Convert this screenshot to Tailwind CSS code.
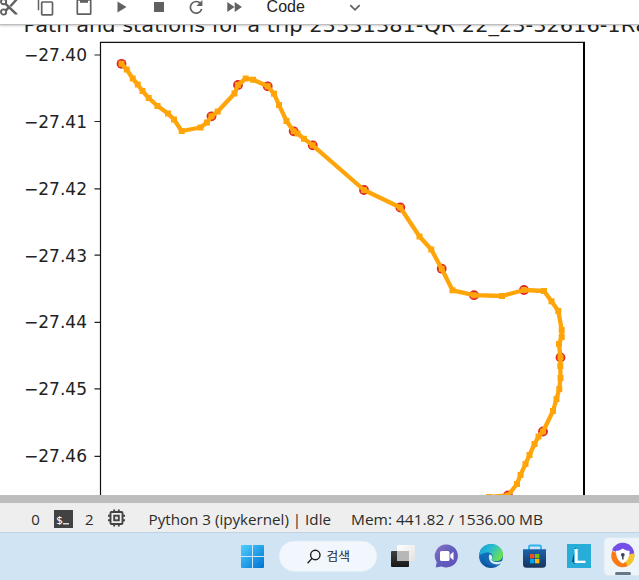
<!DOCTYPE html>
<html lang="ko">
<head>
    <meta charset="UTF-8">
    <meta name="viewport" content="width=device-width, initial-scale=1.0">
    <title>JupyterLab - Path and stations</title>
    <script src="https://cdn.jsdelivr.net/npm/@tailwindcss/browser@4"></script>
</head>
<body class="w-[639px] h-[580px] overflow-hidden flex flex-col bg-white">
    <!-- Notebook toolbar -->
    <header class="h-[25px] shrink-0 relative z-10 bg-white border-b border-[#bdbdbd] shadow-[0_1px_2px_rgba(0,0,0,0.2)] overflow-hidden">
        <svg class="block" width="639" height="24" viewBox="0 0 639 24" fill="#616161">
            <!-- Cut -->
            <g fill="none" stroke="#616161" stroke-width="1.9">
                <circle cx="3.6" cy="1.7" r="2.6"/>
                <circle cx="3.6" cy="12" r="2.6"/>
            </g>
            <path d="M5.6 2.2L17.5 13.6v.8h-2.6L4 4zM5 9.6l3-3 1.800 1.600-3.200 3.200zM9.500 5.500L15-.5h2.500V.3L11.300 7z"/>
            <!-- Copy -->
            <path d="M38.500 10.300V-1h9" fill="none" stroke="#616161" stroke-width="1.500"/>
            <rect x="41.700" y="2" width="10.800" height="12.800" rx=".8" fill="none" stroke="#616161" stroke-width="1.700"/>
            <!-- Paste -->
            <rect x="77.300" y="0" width="13.400" height="14.200" rx=".8" fill="none" stroke="#616161" stroke-width="1.700"/>
            <path d="M80 0h8v2.800h-8z"/>
            <!-- Run, stop, restart, run all -->
            <path d="M117.500 1.600v11L126.500 7z"/>
            <path d="M154 2h10v10h-10z"/>
            <path d="M200.600 3.600A5.800 5.800 0 1 0 201.700 9" fill="none" stroke="#616161" stroke-width="1.700"/>
            <path d="M202.400 0v6h-6z"/>
            <path d="M227.300 2v10l7.200-5zM234.700 2v10l7.200-5z"/>
            <text x="266.500" y="12" font-size="16" font-family="Liberation Sans, Arial, sans-serif" fill="#222" textLength="38.500">Code</text>
            <path d="M350.300 5.200l4.700 4.700 4.700-4.700" fill="none" stroke="#616161" stroke-width="1.700"/>
        </svg>
    </header>

    <!-- Plot output -->
    <main class="h-[470px] shrink-0 overflow-hidden">
        <svg class="block" width="639" height="470" viewBox="0 25 639 470">
            <g font-family="DejaVu Sans, sans-serif" fill="#222" font-size="16.800">
                <text x="23.500" y="32" font-size="20" textLength="625" lengthAdjust="spacingAndGlyphs">Path and stations for a trip 23331381-QR 22_23-32616-1R8</text>
                <text x="24" y="61" textLength="63" lengthAdjust="spacingAndGlyphs">−27.40</text>
                <text x="24" y="128" textLength="63" lengthAdjust="spacingAndGlyphs">−27.41</text>
                <text x="24" y="194.700" textLength="63" lengthAdjust="spacingAndGlyphs">−27.42</text>
                <text x="24" y="261.500" textLength="63" lengthAdjust="spacingAndGlyphs">−27.43</text>
                <text x="24" y="328.300" textLength="63" lengthAdjust="spacingAndGlyphs">−27.44</text>
                <text x="24" y="395" textLength="63" lengthAdjust="spacingAndGlyphs">−27.45</text>
                <text x="24" y="462" textLength="63" lengthAdjust="spacingAndGlyphs">−27.46</text>
            </g>
            <path d="M94.500 55h6M94.500 121.500h6M94.500 188.800h6M94.500 255.200h6M94.500 322.300h6M94.500 388.800h6M94.500 456.300h6" stroke="#222" stroke-width="1.200"/>
            <path d="M100.500 495V42.400H585" fill="none" stroke="#111" stroke-width="1.200"/>
            <path d="M584 42v453" stroke="#000" stroke-width="2"/>
            <g id="stations" fill="#dc2a2a"></g>
            <polyline id="path" fill="none" stroke="#ffa50a" stroke-width="4.300" stroke-linejoin="round"/>
            <g id="stops" fill="#ffa50a"></g>
        </svg>
    </main>
    <div class="h-2 shrink-0 bg-[#bdbdbd]"></div>

    <!-- Status bar -->
    <div class="h-[29px] shrink-0 bg-[#eeeeee]">
        <svg class="block" width="639" height="29" viewBox="0 503 639 29" font-family="Open Sans, Noto Sans, sans-serif" font-size="15" fill="#2b2b2b">
            <text x="31.300" y="525">0</text>
            <path d="M54 510h19v18H54z" fill="#424242"/>
            <text x="56.300" y="523.500" font-size="11.500" font-family="Noto Sans, sans-serif" fill="#fff">$</text>
            <path d="M63 523.800h6" stroke="#fff" stroke-width="1.200"/>
            <text x="85" y="525">2</text>
            <!-- Kernel chip -->
            <g fill="none" stroke="#424242" stroke-width="1.900">
                <rect x="110.500" y="512" width="12" height="12" rx="1"/>
                <rect x="114.200" y="515.700" width="4.600" height="4.600"/>
                <path d="M114.200 509.500v2.500M118.800 509.500v2.500M114.200 524v2.500M118.800 524v2.500M108 515.700h2.500M108 520.300h2.500M122.500 515.700h2.500M122.500 520.300h2.500"/>
            </g>
            <text x="148.500" y="525" textLength="182.500" lengthAdjust="spacingAndGlyphs">Python 3 (ipykernel) | Idle</text>
            <text x="351" y="525" textLength="192" lengthAdjust="spacingAndGlyphs">Mem: 441.82 / 1536.00 MB</text>
        </svg>
    </div>

    <!-- Taskbar -->
    <footer class="h-12 shrink-0 bg-[#d0e4f3] border-t border-[#bfd2e2]">
        <svg class="block" width="639" height="47" viewBox="0 533 639 47">
            <defs>
                <linearGradient id="win" gradientUnits="userSpaceOnUse" x1="241" y1="545" x2="264" y2="568"><stop stop-color="#4dd0ff"/><stop offset="1" stop-color="#0072d0"/></linearGradient>
                <linearGradient id="dark" x1="0" y1="0" x2="0" y2="1"><stop stop-color="#424242"/><stop offset="1" stop-color="#171717"/></linearGradient>
                <linearGradient id="light" x1="0" y1="0" x2="1" y2="1"><stop stop-color="#fff"/><stop offset="1" stop-color="#e2e2e2"/></linearGradient>
                <linearGradient id="chat" x1="0" y1="0" x2="1" y2="1"><stop stop-color="#8e72c4"/><stop offset=".5" stop-color="#5f5dbd"/><stop offset="1" stop-color="#6551b8"/></linearGradient>
                <linearGradient id="edge" x1="0" y1="0" x2="1" y2=".5"><stop stop-color="#149ad4"/><stop offset=".5" stop-color="#27bcd3"/><stop offset="1" stop-color="#68df55"/></linearGradient>
                <linearGradient id="edgeblue" x1="0" y1="0" x2="0" y2="1"><stop stop-color="#1689d6"/><stop offset="1" stop-color="#0c4f9c"/></linearGradient>
                <linearGradient id="store" x1="0" y1="0" x2="0" y2="1"><stop stop-color="#1b62ac"/><stop offset="1" stop-color="#17345d"/></linearGradient>
            </defs>
            <!-- Start -->
            <path d="M242 545h10v11h-11v-10a1 1 0 0 1 1-1zM253 545h10a1 1 0 0 1 1 1v10h-11zM241 557h11v11h-10a1 1 0 0 1-1-1zM253 557h11v10a1 1 0 0 1-1 1h-10z" fill="url(#win)"/>
            <!-- Search -->
            <rect x="279" y="541" width="98" height="30.500" rx="15.200" fill="#f1f7fc" stroke="#dfebf5" stroke-width=".8"/>
            <g fill="none" stroke="#1c1c1c" stroke-width="1.400" stroke-linecap="round">
                <circle cx="315.300" cy="555" r="4.700"/>
                <path d="M311.800 558.600l-3.800 4.200"/>
            </g>
            <text x="326.500" y="560.500" font-size="12.500" font-family="Noto Sans, Noto Sans CJK KR, sans-serif" fill="#1c1c1c" textLength="23.500" lengthAdjust="spacingAndGlyphs">검색</text>
            <!-- Task view -->
            <rect x="391" y="551" width="18" height="16" rx="1" fill="url(#dark)"/>
            <rect x="397" y="545" width="18" height="16" rx="1" fill="url(#light)"/>
            <path d="M397 551h12v10h-12z" fill="#b7b7b7"/>
            <!-- Chat -->
            <path d="M446.500 544.500a11.500 11.500 0 1 1-5 21.900l-5.800 1.100 1-5.200a11.500 11.500 0 0 1 9.800-17.800z" fill="url(#chat)"/>
            <rect x="440" y="551" width="9.500" height="10" rx="1.500" fill="#fff"/>
            <path d="M450.300 554.500l3.200-2.700v8.400l-3.200-2.700z" fill="#fff"/>
            <!-- Edge -->
            <circle cx="491" cy="556" r="12" fill="url(#edgeblue)"/>
            <path d="M479 556.500C479.300 549 484.500 544 491 544c7 0 12 5 12 10.600 0 4.400-3.200 6.600-6.800 6.600-3.400 0-5-1.200-4.200-2.500 1.400-2.100.6-6.300-4.500-6.300-4.200 0-7.700 1.800-8.500 4.100z" fill="url(#edge)"/>
            <path d="M487.500 552.400c-3.400 3-3.500 8 .1 11.500 2.900 2.900 8 4.600 13.600-.7-7 2.500-11.800-1-9.800-4.300 1.500-2.300.7-6.100-3.900-6.500z" fill="#1469b5"/>
            <path d="M489.300 554.500c-1.500 4 .9 9 5.800 9.800 3 .4 5.100-.5 6.300-1.600l.8-1.800c-2.500 1-6 1.400-8.500.5-2.200-.8-2.400-1.700-1.700-2.800 1-1.700-.5-4.600-2.700-4.100z" fill="#d9edf8"/>
            <!-- Store -->
            <path d="M529 550v-3.200a1.300 1.300 0 0 1 1.300-1.300h9.400a1.300 1.300 0 0 1 1.300 1.300v3.200" fill="none" stroke="#2cb5ee" stroke-width="1.800"/>
            <path d="M523 549.300h23v14.900a3.500 3.500 0 0 1-3.500 3.500h-16a3.500 3.500 0 0 1-3.500-3.500z" fill="url(#store)"/>
            <path d="M530 554h4.300v4.300H530z" fill="#f25022"/>
            <path d="M535 554h4.300v4.300H535z" fill="#7fba00"/>
            <path d="M530 559h4.300v4.300H530z" fill="#00a4ef"/>
            <path d="M535 559h4.300v4.300H535z" fill="#ffb900"/>
            <!-- L app -->
            <path d="M567 544h24v24h-24z" fill="#27add8"/>
            <path d="M575.500 547l-3.500 14.500 3 2.500 2-5z" fill="#124066"/>
            <text x="573" y="562.500" font-size="21" font-weight="bold" font-family="Liberation Sans, Arial, sans-serif" fill="#fff">L</text>
            <!-- Secure browser, active window -->
            <rect x="604" y="537.500" width="44" height="38" rx="4" fill="#edf4fa" stroke="#dce7f0"/>
            <g fill="none" stroke-width="7">
                <path d="M615.300 551.500a8 8 0 0 1 15.500 3.500" stroke="#7450e8"/>
                <path d="M630.900 554a8 8 0 0 1-8 9.500" stroke="#f4c62e"/>
                <path d="M626 563a8 8 0 0 1-10.500-10.500" stroke="#fb7a16"/>
            </g>
            <path d="M622.800 548.500c2 1.700 4.200 2.300 6.700 2.300.3 6-1.700 10.200-6.700 12.700-5-2.500-7-6.700-6.700-12.700 2.500 0 4.700-.6 6.700-2.300z" fill="#fff"/>
            <circle cx="622.800" cy="554.800" r="1.900" fill="#384664"/>
            <path d="M622.100 555h1.500v4.500h-1.500z" fill="#384664"/>
            <rect x="615" y="572" width="16" height="3" rx="1.500" fill="#61798b"/>
        </svg>
    </footer>

    <script>
        // Route points in plot pixels; s marks a station
        const points = [
            [121.5, 63.8, 's'], [126.7, 69.5], [132.7, 78.5], [137.7, 84.5], [142.5, 91], [148.7, 98], [157.5, 106],
            [168, 113.5], [174, 119.5], [181.7, 131], [200.5, 127.5], [207, 122.5], [211.5, 116.3, 's'],
            [217.7, 111.5], [234.5, 93.5], [238, 85, 's'], [245.7, 78.5], [253, 79.7], [267.7, 86.3, 's'],
            [274, 93.7], [279, 105], [286.5, 121], [293.7, 131.3, 's'], [297.5, 133.5], [304, 138.8],
            [312.7, 145.3, 's'], [364, 190, 's'], [400.3, 207.5, 's'], [419.5, 236.5], [431.3, 249.5],
            [441.7, 268.7, 's'], [452.5, 290.3], [474, 295.2, 's'], [502, 296], [524, 290, 's'], [544, 291],
            [551.5, 301.3], [558.3, 311], [561.7, 330], [561.7, 337], [559, 344], [560.5, 357.5, 's'],
            [560.3, 366], [560.5, 378], [559.3, 389], [556.5, 399], [553, 411], [543, 431.5, 's'],
            [538.5, 436.5], [534.5, 444], [529.5, 455], [525.5, 464], [520.5, 475], [517, 484], [508, 495.5, 's'], [489, 497]
        ];
        const stations = document.getElementById('stations');
        const stops = document.getElementById('stops');
        document.getElementById('path').setAttribute('points', points.map(p => p[0] + ',' + p[1]).join(' '));
        points.forEach(([x, y, s]) => {
            if (s) {
                stations.innerHTML += `<circle cx="${x}" cy="${y}" r="4.9"/>`;
                stops.innerHTML += `<rect x="${x - 3}" y="${y - 3}" width="6" height="6" rx="1"/>`;
            } else {
                stops.innerHTML += `<rect x="${x - 3}" y="${y - 3}" width="6" height="6"/>`;
            }
        });
    </script>
</body>
</html>
